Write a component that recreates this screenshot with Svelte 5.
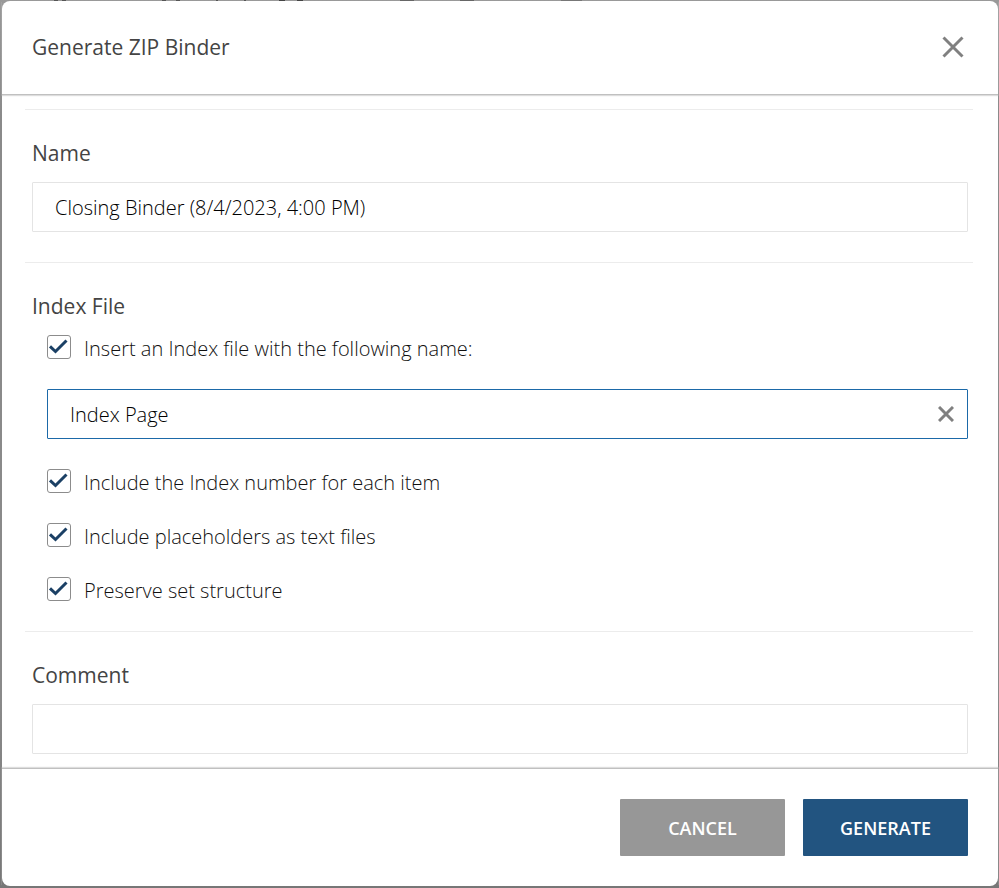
<script lang="ts">
	let name = $state('Closing Binder (8/4/2023, 4:00 PM)');
	let indexName = $state('Index Page');
	let comment = $state('');

	let insertIndex = $state(true);
	let options = $state([
		{ id: 'numbers', label: 'Include the Index number for each item', checked: true },
		{ id: 'placeholders', label: 'Include placeholders as text files', checked: true },
		{ id: 'structure', label: 'Preserve set structure', checked: true }
	]);
</script>

{#snippet tick()}
	<svg class="tick" viewBox="0 0 24 24" aria-hidden="true">
		<path d="M3 11.3 L8.5 16.5 L19.5 5.5" />
	</svg>
{/snippet}

<div class="backdrop">
	<div class="dialog" role="dialog" aria-labelledby="dialog-title">
		<header>
			<h1 id="dialog-title">Generate ZIP Binder</h1>
			<button class="close" type="button" aria-label="Close">
				<svg viewBox="0 0 22 22" width="22" height="22" aria-hidden="true">
					<path d="M1.5 1.5 L20.5 20.5 M20.5 1.5 L1.5 20.5" />
				</svg>
			</button>
		</header>

		<div class="content">
			<section>
				<label class="heading" for="name">Name</label>
				<input class="text" id="name" type="text" bind:value={name} />
			</section>

			<section>
				<h2 class="heading">Index File</h2>
				<div class="options">
					<label class="option">
						<span class="box">
							<input type="checkbox" bind:checked={insertIndex} />
							{@render tick()}
						</span>
						<span class="caption">Insert an Index file with the following name:</span>
					</label>
					<div class="clearable">
						<input class="text" type="text" aria-label="Index file name" bind:value={indexName} />
						<button type="button" aria-label="Clear" onclick={() => (indexName = '')}>
							<svg viewBox="0 0 16 16" width="16" height="16" aria-hidden="true">
								<path d="M1 1 L15 15 M15 1 L1 15" />
							</svg>
						</button>
					</div>
					{#each options as option (option.id)}
						<label class="option">
							<span class="box">
								<input type="checkbox" bind:checked={option.checked} />
								{@render tick()}
							</span>
							<span class="caption">{option.label}</span>
						</label>
					{/each}
				</div>
			</section>

			<section class="last">
				<label class="heading" for="comment">Comment</label>
				<input class="text" id="comment" type="text" bind:value={comment} />
			</section>
		</div>

		<footer>
			<button class="action cancel" type="button">CANCEL</button>
			<button class="action generate" type="button">GENERATE</button>
		</footer>
	</div>
</div>

<style>
	:global(body) {
		margin: 0;
		background: #8a8a8a;
	}

	.backdrop,
	.backdrop * {
		box-sizing: border-box;
	}

	/* the first layer is the sliver of dimmed page above the dialog */
	.backdrop {
		display: flex;
		min-height: 100vh;
		padding: 1px 1px 2px 2px;
		background:
			linear-gradient(
					90deg,
					transparent 54px,
					#555 54px 58px,
					transparent 58px 62px,
					#555 62px 66px,
					transparent 66px 162px,
					#555 162px 166px,
					transparent 166px 176px,
					#555 176px 180px,
					transparent 180px 216px,
					#555 216px 218px,
					transparent 218px 244px,
					#555 244px 246px,
					transparent 246px 279px,
					#444 279px 285px,
					transparent 285px 297px,
					#444 297px 303px,
					transparent 303px 400px,
					#666 400px 414px,
					transparent 414px 460px,
					#666 460px 474px,
					transparent 474px 561px,
					#777 561px 582px,
					transparent 582px
				)
				0 0 / 100% 1px no-repeat,
			linear-gradient(#999, #8a8a8a 120px, #8a8a8a 700px, #777);
		font-family: 'Open Sans', 'Noto Sans', sans-serif;
		font-size: 20px;
		font-weight: 300;
		color: #111;
	}

	.dialog {
		display: flex;
		flex: 1;
		flex-direction: column;
		min-width: 0;
		border-radius: 8px;
		background: #fff;
	}

	header {
		display: flex;
		align-items: center;
		justify-content: space-between;
		height: 94px;
		padding: 0 34px 2px 30px;
		border-bottom: 1px solid #c0c0c0;
		box-shadow: 0 1px 1px #ddd;
	}

	h1,
	.heading {
		display: block;
		margin: 0;
		font-size: 21px;
		font-weight: 400;
		line-height: 30px;
		color: #444;
	}

	button {
		padding: 0;
		border: 0;
		font: inherit;
		cursor: pointer;
	}

	.close,
	.clearable button {
		display: flex;
		background: none;
	}

	.close path,
	.clearable path {
		fill: none;
		stroke: #808080;
		stroke-width: 3;
	}

	.content {
		flex: 1;
		padding: 14px 25px 0 23px;
	}

	section {
		padding: 28px 5px 30px 7px;
		border-top: 1px solid #ececec;
	}

	.last {
		padding-bottom: 14px;
	}

	.heading {
		margin-bottom: 14px;
	}

	.text {
		display: block;
		width: 100%;
		height: 50px;
		padding: 0 22px;
		border: 1px solid #e4e4e4;
		border-radius: 1px;
		background: #fff;
		font: inherit;
		color: #000;
		outline: none;
	}

	.options {
		display: flex;
		flex-direction: column;
		gap: 30px;
		padding-left: 15px;
	}

	.option {
		display: flex;
		gap: 13px;
		height: 24px;
	}

	.caption {
		line-height: 28px;
	}

	.box {
		display: grid;
		width: 24px;
		height: 24px;
	}

	.box > :global(*) {
		grid-area: 1 / 1;
	}

	.box input {
		width: 24px;
		height: 24px;
		margin: 0;
		border: 1px solid #8c8c8c;
		border-radius: 3px;
		background: #fff;
		appearance: none;
	}

	.tick {
		visibility: hidden;
		width: 24px;
		height: 24px;
		pointer-events: none;
	}

	.tick path {
		fill: none;
		stroke: #1b4065;
		stroke-width: 3;
	}

	.box input:checked + .tick {
		visibility: visible;
	}

	.clearable {
		display: grid;
		align-items: center;
	}

	.clearable > * {
		grid-area: 1 / 1;
	}

	.clearable .text {
		padding-right: 48px;
		border-color: #1b69a8;
	}

	.clearable button {
		justify-self: end;
		margin-right: 14px;
	}

	footer {
		display: flex;
		justify-content: flex-end;
		gap: 18px;
		padding: 30px;
		border-top: 1px solid #c0c0c0;
		box-shadow: 0 -1px 1px #ddd;
	}

	.action {
		width: 165px;
		height: 57px;
		border-radius: 1px;
		font-size: 18px;
		font-weight: 600;
		color: #fff;
	}

	.cancel {
		background: #979797;
	}

	.generate {
		background: #225480;
	}
</style>
